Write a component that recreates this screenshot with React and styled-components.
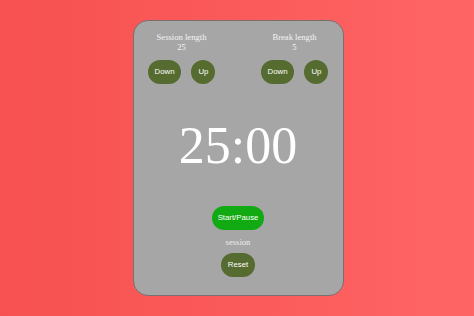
import React from "react";
import styled, { createGlobalStyle } from "styled-components";

const Global = createGlobalStyle`
  html, body { margin: 0; padding: 0; }
  body {
    width: 474px;
    height: 316px;
    overflow: hidden;
    background: linear-gradient(90deg, #f75151 0%, #fb5a5a 50%, #ff6565 100%);
    font-family: "Liberation Serif", "Times New Roman", serif;
  }
`;

const Page = styled.div`
  width: 474px;
  height: 316px;
  display: flex;
  justify-content: center;
  align-items: flex-start;
  padding-top: 20px;
  box-sizing: border-box;
`;

const Card = styled.div`
  box-sizing: border-box;
  width: 211px;
  height: 276px;
  margin-left: 2px;
  background: #a6a6a6;
  border: 1px solid #7a6f6f;
  border-radius: 15px;
  padding: 11px 15px 0;
  display: flex;
  flex-direction: column;
  align-items: center;
`;

const Controls = styled.div`
  width: 100%;
  display: flex;
  justify-content: space-between;
`;

const Group = styled.div`
  display: flex;
  flex-direction: column;
  align-items: center;
  width: 66px;
`;

const Label = styled.div`
  color: #f4f4f4;
  font-size: 8.6px;
  line-height: 10px;
  white-space: nowrap;
  text-align: center;
`;

const ButtonRow = styled.div`
  display: flex;
  gap: 10px;
  margin-top: 8px;
`;

const Button = styled.button`
  height: 24px;
  padding: 0 7px;
  border: none;
  border-radius: 12px;
  background: ${(p) => (p.$primary ? "#12aa12" : "#556b2f")};
  color: #ffffff;
  font-family: "Liberation Sans", Arial, sans-serif;
  font-size: 7.8px;
  line-height: 24px;
  white-space: nowrap;
  cursor: pointer;
`;

const Timer = styled.div`
  margin-top: 36px;
  color: #ffffff;
  font-size: 52px;
  line-height: 52px;
  height: 52px;
  white-space: nowrap;
`;

const Status = styled.div`
  margin-top: 7px;
  margin-bottom: 6px;
  color: #ececec;
  font-size: 8.6px;
  line-height: 10px;
`;

const StartButton = styled(Button)`
  margin-top: 34px;
  padding: 0 6px;
`;

function LengthControl({ title, value }) {
  return (
    <Group>
      <Label>{title}</Label>
      <Label>{value}</Label>
      <ButtonRow>
        <Button>Down</Button>
        <Button>Up</Button>
      </ButtonRow>
    </Group>
  );
}

export default function App() {
  return (
    <>
      <Global />
      <Page>
        <Card>
          <Controls>
            <LengthControl title="Session length" value="25" />
            <LengthControl title="Break length" value="5" />
          </Controls>
          <Timer>25:00</Timer>
          <StartButton $primary>Start/Pause</StartButton>
          <Status>session</Status>
          <Button>Reset</Button>
        </Card>
      </Page>
    </>
  );
}
